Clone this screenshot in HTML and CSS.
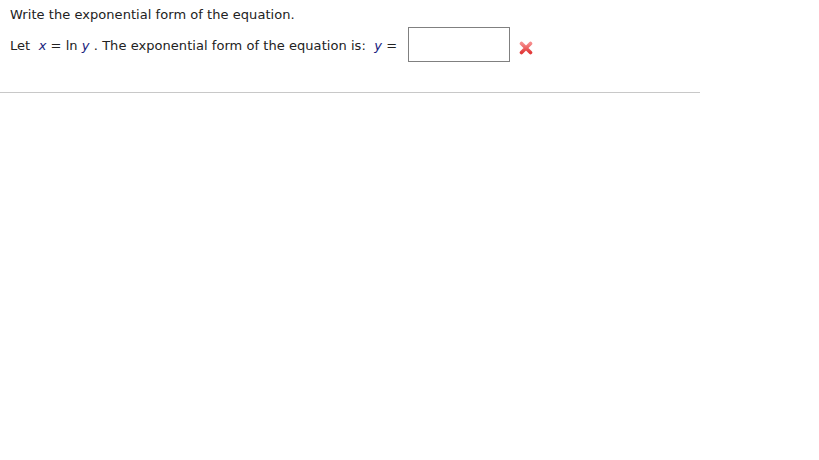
FILE: index.html
```html
<!DOCTYPE html>
<html>
<head>
<meta charset="utf-8">
<link rel="stylesheet" href="styles.css">
</head>
<body>
<div class="question">
  <p class="prompt">Write the exponential form of the equation.</p>
  <div class="answer-row">
    <span class="stem">Let&nbsp; <i class="var">x</i> = ln <i class="var">y</i> . The exponential form of the equation is:&nbsp; <i class="var">y</i> =</span>
    <span class="answer-box"></span>
    <svg class="wrong" width="14" height="14" viewBox="0 0 14 14" aria-hidden="true">
      <defs>
        <linearGradient id="g" x1="0" y1="0" x2="0" y2="1">
          <stop offset="0" stop-color="#f58a8a"/>
          <stop offset="1" stop-color="#e23a3a"/>
        </linearGradient>
      </defs>
      <path d="M2.5 2.5 L11.5 11.5 M11.5 2.5 L2.5 11.5" stroke="url(#g)" stroke-width="3.6" stroke-linecap="round"/>
    </svg>
  </div>
</div>
<hr class="divider">
</body>
</html>
```
FILE: styles.css
```css
body {
  margin: 0;
  font-family: "DejaVu Sans", Verdana, sans-serif;
  font-size: 13px;
  letter-spacing: 0.05px;
  color: #222;
  background: #fff;
}
.question {
  padding: 7px 10px 0 10px;
}
.prompt {
  margin: 0;
  line-height: 16px;
}
.answer-row {
  display: flex;
  align-items: center;
  margin-top: 3px;
  height: 36px;
}
.stem {
  position: relative;
  top: 1px;
}
.var {
  font-style: italic;
  color: #1a237e;
}
.answer-box {
  display: inline-block;
  width: 100px;
  height: 33px;
  border: 1px solid #808080;
  margin-left: 11px;
}
.wrong {
  margin-left: 9px;
  margin-top: 7px;
}
.divider {
  border: 0;
  border-top: 1px solid #c8c8c8;
  width: 700px;
  margin: 30px 0 0 0;
}
```
